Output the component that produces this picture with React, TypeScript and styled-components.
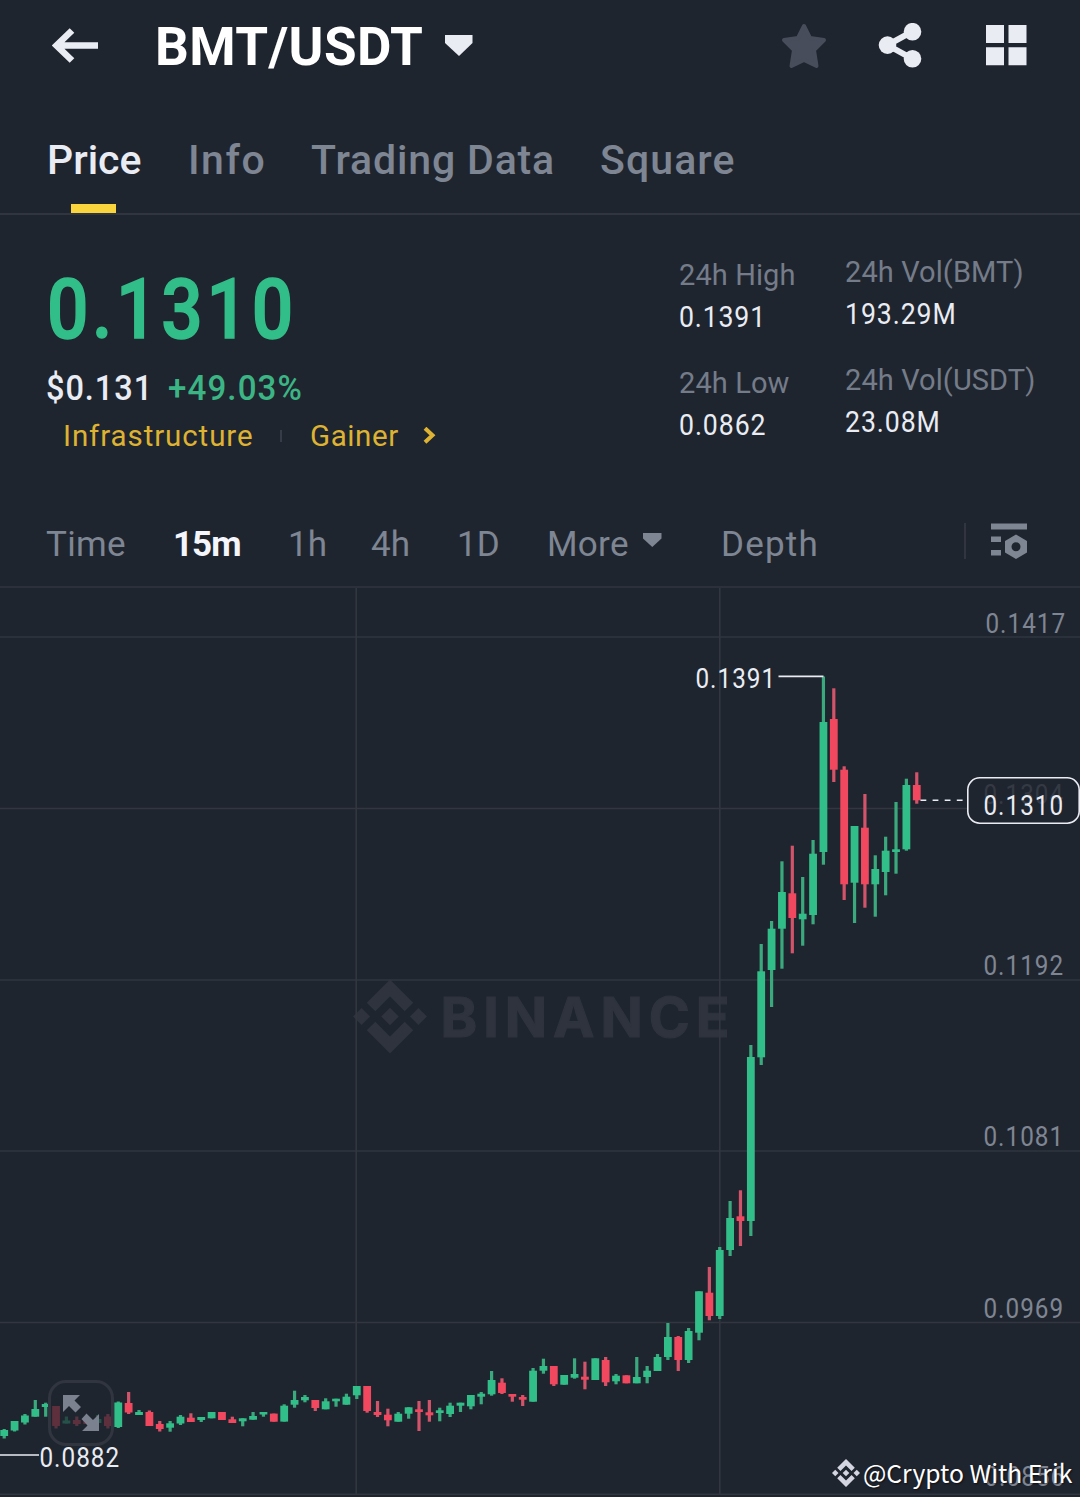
import React from "react";
import styled, { createGlobalStyle } from "styled-components";

const c = {
  bg: "#1f252f",
  line: "#30353f",
  text: "#eaecf3",
  muted: "#7f8693",
  faint: "#757c89",
  up: "#32be88",
  upWick: "#3ba97e",
  down: "#f1475f",
  downWick: "#d2546a",
  gold: "#deb232",
};

const Global = createGlobalStyle`
  *, *::before, *::after { box-sizing: border-box; }
  body { margin: 0; background: ${c.bg}; }
`;

const Screen = styled.main`
  width: 1080px;
  height: 1497px;
  overflow: hidden;
  display: flex;
  flex-direction: column;
  background: ${c.bg};
  color: ${c.text};
  font-family: Roboto, "Liberation Sans", sans-serif;
  white-space: nowrap;
`;

const Header = styled.header`
  height: 94px;
  flex: none;
  display: flex;
  align-items: center;
  padding: 0 52px;
`;

const Title = styled.h1`
  margin: 0 0 0 57px;
  width: 270px;
  font-size: 53px;
  line-height: 60px;
  font-weight: 700;
  letter-spacing: 0.4px;
  color: #fff;
`;

const Actions = styled.div`
  margin-left: auto;
  display: flex;
  align-items: center;
`;

const Icon = styled.svg<{ $ml?: number }>`
  display: block;
  flex: none;
  margin-left: ${(p) => p.$ml ?? 0}px;
`;

const Tabs = styled.nav`
  height: 121px;
  flex: none;
  display: flex;
  padding: 41px 47px 0;
  border-bottom: 2px solid ${c.line};
`;

const Tab = styled.div<{ $active?: boolean; $w: number; $ls?: number }>`
  width: ${(p) => p.$w}px;
  display: flex;
  flex-direction: column;
  justify-content: space-between;
  font-size: 41px;
  line-height: 50px;
  font-weight: 500;
  letter-spacing: ${(p) => p.$ls ?? 0}px;
  color: ${(p) => (p.$active ? c.text : c.muted)};
  &::after {
    content: "";
    width: 45px;
    height: 9px;
    margin-left: 24px;
    background: ${(p) => (p.$active ? "#fad43c" : "transparent")};
  }
`;

const Summary = styled.section`
  height: 287px;
  flex: none;
  display: flex;
  justify-content: space-between;
  padding: 36px 0 0 46px;
`;

const Quote = styled.div`
  display: flex;
  flex-direction: column;
  padding-top: 8px;
`;

const LastPrice = styled.div`
  padding-left: 1px;
  font-size: 83px;
  line-height: 102px;
  font-weight: 500;
  letter-spacing: 4.2px;
  color: ${c.up};
  -webkit-text-stroke: 1.6px ${c.up};
  transform: scaleX(0.88);
  transform-origin: 0 50%;
`;

const Change = styled.div`
  display: flex;
  gap: 17px;
  font-size: 35px;
  line-height: 56px;
  font-weight: 500;
`;

const Fiat = styled.span`
  width: 105px;
  letter-spacing: 1px;
  transform: scaleX(0.93);
  transform-origin: 0 50%;
`;

const Percent = styled.span`
  letter-spacing: 1.2px;
  color: #3cb585;
  transform: scaleX(0.945);
  transform-origin: 0 50%;
`;

const Tags = styled.div`
  display: flex;
  align-items: center;
  padding-left: 17px;
  font-size: 29.5px;
  line-height: 38px;
  color: ${c.gold};
`;

const Tag = styled.span<{ $w: number; $ls: number }>`
  width: ${(p) => p.$w}px;
  letter-spacing: ${(p) => p.$ls}px;
`;

const TagDivider = styled.i`
  width: 2px;
  height: 12px;
  margin: 0 28px 0 27px;
  background: #373d48;
`;

const Stats = styled.div`
  display: grid;
  grid-template-columns: 166px 235px;
  align-content: start;
`;

const StatColumn = styled.dl<{ $lift?: boolean }>`
  margin: 0;
  padding-top: ${(p) => (p.$lift ? 0 : 3)}px;
  font-size: 29px;
  line-height: 42px;
`;

const StatLabel = styled.dt<{ $ls: number }>`
  letter-spacing: ${(p) => p.$ls}px;
  color: ${c.faint};
`;

const StatValue = styled.dd<{ $ls: number }>`
  margin: 0 0 24px;
  letter-spacing: ${(p) => p.$ls}px;
  transform: scaleX(0.92);
  transform-origin: 0 50%;
`;

const Intervals = styled.nav`
  height: 86px;
  flex: none;
  display: flex;
  align-items: center;
  padding: 1px 52px 0 46px;
  border-bottom: 2px solid #2b303a;
`;

const Interval = styled.div<{ $w: number; $active?: boolean; $ls?: number }>`
  width: ${(p) => p.$w}px;
  display: flex;
  align-items: center;
  font-size: 35px;
  line-height: 44px;
  font-weight: ${(p) => (p.$active ? 700 : 400)};
  letter-spacing: ${(p) => p.$ls ?? 0}px;
  color: ${(p) => (p.$active ? "#f4f6fb" : c.muted)};
`;

const ToolDivider = styled.i`
  width: 2px;
  height: 36px;
  margin: -8px 0 0 auto;
  background: ${c.line};
`;

const ChartArea = styled.section`
  position: relative;
  flex: 1;
  min-height: 0;
`;

const Plot = styled.svg`
  display: block;
`;

const ExpandButton = styled.button`
  position: absolute;
  left: 48px;
  top: 792px;
  width: 66px;
  height: 66px;
  padding: 0;
  display: grid;
  place-items: center;
  border: 3px solid #30353f;
  border-radius: 18px;
  background: rgba(31, 37, 47, 0.7);
`;

const Credit = styled.div`
  position: absolute;
  left: 832px;
  top: 867px;
  height: 36px;
  display: flex;
  align-items: center;
  gap: 3px;
  font-family: "Noto Sans CJK SC", "Noto Sans", sans-serif;
  font-size: 24.7px;
  line-height: 36px;
  color: #fff;
  text-shadow: 1px 1px 2px rgba(0, 0, 0, 0.6);
`;

const Handle = styled.span`
  padding-bottom: 3px;
`;

/* [direction, high, body top, body bottom, low] */
type Candle = ["u" | "d", number, number, number, number];

const candles: Candle[] = [
  ["u", 1429, 1430, 1436, 1438.5],
  ["u", 1421, 1421, 1430.5, 1431.5],
  ["u", 1414, 1415.5, 1422.5, 1424.5],
  ["u", 1400, 1409, 1416.7, 1416.7],
  ["u", 1402.7, 1404, 1407, 1416.7],
  ["d", 1406, 1406, 1426, 1428.5],
  ["u", 1416.5, 1420.5, 1423.5, 1423.5],
  ["d", 1416.5, 1420, 1424, 1426],
  ["d", 1418, 1420, 1424, 1424],
  ["u", 1415, 1419, 1423, 1423],
  ["d", 1414, 1416.5, 1426, 1428.5],
  ["u", 1401.5, 1402.5, 1427, 1428],
  ["d", 1392, 1403, 1412.5, 1414],
  ["u", 1410, 1412, 1415, 1415],
  ["d", 1410.5, 1412, 1426, 1426],
  ["d", 1421, 1424, 1429, 1431.5],
  ["u", 1421, 1423.3, 1427.7, 1431.7],
  ["u", 1415, 1416.7, 1423.5, 1425],
  ["d", 1413.3, 1417.7, 1422, 1422],
  ["u", 1417, 1417, 1420, 1422],
  ["u", 1412, 1412, 1418.3, 1418.3],
  ["d", 1412, 1412, 1420, 1420],
  ["d", 1416.7, 1419.3, 1423, 1423],
  ["u", 1418.3, 1418.3, 1421.3, 1426.3],
  ["u", 1412, 1416, 1419.7, 1419.7],
  ["u", 1412, 1412, 1414.5, 1416.7],
  ["d", 1413.6, 1413.6, 1421.7, 1421.7],
  ["u", 1404.3, 1405.7, 1421.6, 1421.6],
  ["u", 1390.7, 1400, 1404.7, 1407.7],
  ["u", 1395, 1397, 1400.3, 1402.3],
  ["d", 1400, 1400, 1408, 1411],
  ["u", 1398.3, 1401.3, 1409.3, 1409.3],
  ["u", 1398.7, 1398.7, 1401.3, 1406.7],
  ["u", 1393.7, 1396.7, 1404.7, 1404.7],
  ["u", 1386, 1386, 1395.3, 1399],
  ["d", 1386, 1386, 1411, 1412.7],
  ["d", 1401, 1412, 1415, 1417],
  ["d", 1408.7, 1414.7, 1420.3, 1426.3],
  ["u", 1412, 1413.7, 1421.7, 1421.7],
  ["u", 1407.3, 1407.3, 1413.7, 1418.7],
  ["d", 1401, 1409.3, 1412, 1431],
  ["d", 1400, 1412.3, 1415.3, 1421.7],
  ["u", 1407.7, 1410.3, 1413, 1421.3],
  ["u", 1402.7, 1405.7, 1414, 1417],
  ["u", 1402.7, 1402.7, 1405.7, 1412],
  ["u", 1395, 1395, 1406.3, 1409.3],
  ["u", 1392, 1393.7, 1396.7, 1404.3],
  ["u", 1371, 1380, 1394.3, 1395.7],
  ["d", 1378.3, 1382.7, 1393, 1394],
  ["d", 1394, 1394, 1396.7, 1401.7],
  ["d", 1395, 1397, 1399.7, 1406],
  ["u", 1368, 1370.7, 1401.7, 1401.7],
  ["u", 1358.7, 1366, 1370.7, 1373.7],
  ["d", 1366, 1366, 1384.3, 1386],
  ["u", 1375, 1375, 1384.7, 1384.7],
  ["u", 1358.3, 1374, 1377.7, 1378.7],
  ["d", 1361.7, 1376.7, 1379.7, 1389.3],
  ["u", 1358.3, 1358.3, 1380, 1380],
  ["d", 1357, 1360, 1382.3, 1386],
  ["u", 1374, 1375.7, 1381.3, 1384.3],
  ["d", 1375.3, 1375.3, 1383.3, 1383.3],
  ["u", 1357, 1377, 1383.3, 1383.3],
  ["u", 1366, 1370.7, 1377, 1383.3],
  ["u", 1354, 1357, 1371, 1371],
  ["u", 1323, 1337, 1357, 1360],
  ["d", 1336, 1337, 1360, 1371],
  ["u", 1328, 1331, 1360, 1363],
  ["u", 1291.3, 1291.3, 1332.7, 1340.3],
  ["d", 1267, 1292.7, 1316, 1320.3],
  ["u", 1247, 1250, 1316, 1319],
  ["u", 1201, 1218, 1250, 1256],
  ["d", 1190.3, 1216.3, 1221, 1246],
  ["u", 1045, 1057, 1221, 1236],
  ["u", 944, 971.3, 1057.3, 1065],
  ["u", 921, 928.7, 970, 1007],
  ["u", 861.3, 892, 928.7, 968.7],
  ["d", 845.7, 893.3, 918, 953.3],
  ["u", 877, 913.7, 919.3, 945.7],
  ["u", 840, 853.7, 915, 924.3],
  ["u", 676.5, 722, 852, 864.7],
  ["d", 688.3, 719, 769.7, 782],
  ["d", 766.3, 769.7, 884.3, 900],
  ["u", 826, 826, 882.7, 923],
  ["d", 794, 827.7, 884.3, 907.7],
  ["u", 855.3, 869, 884.3, 916.7],
  ["u", 836.7, 850.7, 872, 895.3],
  ["u", 802, 849.3, 852, 873.7],
  ["u", 778.7, 785, 849.3, 850.7],
  ["d", 772.3, 785, 800.3, 803.7],
];

const FIRST_X = 4.2;
const STEP = 10.37;

const axis = [
  { v: "0.1417", x: 986, y: 632 },
  { v: "0.1192", x: 984, y: 974 },
  { v: "0.1081", x: 984, y: 1145 },
  { v: "0.0969", x: 984, y: 1317 },
  { v: "0.0856", x: 985, y: 1485 },
];

function BinanceMark({ size, color, x, y }: { size: number; color: string; x?: number; y?: number }) {
  return (
    <svg x={x} y={y} width={size} height={size} viewBox="0 0 126.61 126.61" fill={color}>
      <path d="m38.17 53.2 25.14-25.14 25.15 25.15 14.63-14.63L63.31-1.2l-39.77 39.77z" transform="translate(0 1.2)" />
      <path d="m0 63.31 14.63-14.63 14.63 14.63-14.63 14.63z" />
      <path d="m38.17 73.41 25.14 25.14 25.15-25.15 14.63 14.62-39.78 39.78-39.77-39.77z" transform="translate(0 -1.2)" />
      <path d="m97.35 63.31 14.63-14.63 14.63 14.63-14.63 14.63z" />
      <path d="m48.3 63.31 15.01-15.01 15.01 15.01-15.01 15.01z" />
    </svg>
  );
}

const GLYPH_SCALE = 0.9;

function PriceText({ x, y, children, fill }: { x: number; y: number; children: string; fill: string }) {
  return (
    <text
      transform={`translate(${x - 0.6} ${y + 0.6}) scale(${GLYPH_SCALE} 1)`}
      fontSize={27}
      fill={fill}
      textLength={79.8 / GLYPH_SCALE}
      lengthAdjust="spacing"
    >
      {children}
    </text>
  );
}

function Chart() {
  return (
    <Plot width={1080} height={909} viewBox="0 588 1080 909">
      <g fill="#2e333e">
        <BinanceMark x={353} y={979.5} size={74} color="#2e333e" />
        <text
          x={440.5}
          y={1036.5}
          fontFamily="Inter"
          fontWeight={700}
          fontSize={55.5}
          stroke="#2e333e"
          strokeWidth={1.2}
          textLength={289}
          lengthAdjust="spacing"
        >
          BINANCE
        </text>
      </g>
      <g stroke="#31363f" strokeWidth={1.6}>
        {[637, 808.5, 980, 1151, 1322.5, 1494.3].map((y) => (
          <line key={y} x1={0} x2={1080} y1={y} y2={y} />
        ))}
        {[356.2, 719.8].map((x) => (
          <line key={x} x1={x} x2={x} y1={588} y2={1494} />
        ))}
      </g>
      {axis.map((a) => (
        <PriceText key={a.v} x={a.x} y={a.y} fill={c.muted}>
          {a.v}
        </PriceText>
      ))}
      {candles.map(([d, high, top, bottom, low], i) => {
        const x = FIRST_X + STEP * i;
        return (
          <g key={i}>
            <rect x={x - 1.6} y={high} width={3.2} height={low - high} fill={d === "u" ? c.upWick : c.downWick} />
            <rect x={x - 3.9} y={top} width={7.8} height={bottom - top} fill={d === "u" ? c.up : c.down} />
          </g>
        );
      })}
      <g stroke={c.text} strokeWidth={1.6}>
        <line x1={778.5} x2={823.5} y1={676.4} y2={676.4} />
        <line x1={0} x2={39} y1={1455} y2={1455} />
        <line x1={920.5} x2={963} y1={800.3} y2={800.3} strokeDasharray="5.8 6.3" />
        <rect x={967.8} y={777.8} width={111.4} height={45.4} rx={12} fill={c.bg} />
      </g>
      <PriceText x={984} y={803} fill="#343a44">0.1304</PriceText>
      <PriceText x={984} y={814} fill={c.text}>0.1310</PriceText>
      <PriceText x={696} y={687} fill={c.text}>0.1391</PriceText>
      <PriceText x={40} y={1466} fill={c.text}>0.0882</PriceText>
    </Plot>
  );
}

export default function App() {
  return (
    <Screen>
      <Global />
      <Header>
        <Icon width={46} height={38} viewBox="0 0 46 38">
          <path d="M20 2.5 4.5 17.5 20 32.5M5 17.5H46" fill="none" stroke={c.text} strokeWidth={6.6} />
        </Icon>
        <Title>BMT/USDT</Title>
        <Icon width={28} height={24} viewBox="0 0 28 24" $ml={20}>
          <path d="M0 0H27.5V8L14 21 0 8Z" fill={c.text} />
        </Icon>
        <Actions>
          <Icon width={46} height={48} viewBox="0 1 46 48">
            <path
              d="M23 4 29 16 43 18 33 28 35.5 44 23 38 10.5 44 13 28 3 18 17 16Z"
              fill="#474d5a"
              stroke="#474d5a"
              strokeWidth={4}
              strokeLinejoin="round"
            />
          </Icon>
          <Icon width={44} height={48} viewBox="0 1.7 44 48" $ml={51}>
            <path d="M34.5 10 9.5 23.8 34.5 37.5" fill="none" stroke={c.text} strokeWidth={6} />
            <g fill={c.text}>
              <circle cx={34.5} cy={10.4} r={8.8} />
              <circle cx={9.5} cy={23.8} r={8.8} />
              <circle cx={34.5} cy={37.5} r={8.8} />
            </g>
          </Icon>
          <Icon width={42} height={44} viewBox="0 0 42 44" $ml={64}>
            <path d="M0 0H18V18H0ZM22.5 0H40.5V18H22.5ZM0 22.3H18V40.3H0ZM22.5 22.3H40.5V40.3H22.5Z" fill={c.text} />
          </Icon>
        </Actions>
      </Header>

      <Tabs>
        <Tab $active $w={141}>Price</Tab>
        <Tab $w={123} $ls={1.5}>Info</Tab>
        <Tab $w={289} $ls={0.85}>Trading Data</Tab>
        <Tab $w={150} $ls={1.1}>Square</Tab>
      </Tabs>

      <Summary>
        <Quote>
          <LastPrice>0.1310</LastPrice>
          <Change>
            <Fiat>$0.131</Fiat>
            <Percent>+49.03%</Percent>
          </Change>
          <Tags>
            <Tag $w={190} $ls={0.9}>Infrastructure</Tag>
            <TagDivider />
            <Tag $w={113} $ls={0.6}>Gainer</Tag>
            <Icon width={14} height={18} viewBox="0 0.8 14 18">
              <path d="M2 2 9.5 9 2 16" fill="none" stroke={c.gold} strokeWidth={4} />
            </Icon>
          </Tags>
        </Quote>
        <Stats>
          <StatColumn>
            <StatLabel $ls={0.1}>24h High</StatLabel>
            <StatValue $ls={0.9}>0.1391</StatValue>
            <StatLabel $ls={0.1}>24h Low</StatLabel>
            <StatValue $ls={1}>0.0862</StatValue>
          </StatColumn>
          <StatColumn $lift>
            <StatLabel $ls={0.1}>24h Vol(BMT)</StatLabel>
            <StatValue $ls={1}>193.29M</StatValue>
            <StatLabel $ls={0.1}>24h Vol(USDT)</StatLabel>
            <StatValue $ls={1}>23.08M</StatValue>
          </StatColumn>
        </Stats>
      </Summary>

      <Intervals>
        <Interval $w={127} $ls={0.3}>Time</Interval>
        <Interval $w={115} $active $ls={-1}>15m</Interval>
        <Interval $w={83}>1h</Interval>
        <Interval $w={86}>4h</Interval>
        <Interval $w={90}>1D</Interval>
        <Interval $w={174} $ls={0.3}>
          More
          <Icon width={19} height={22} viewBox="0 1 19 22" overflow="visible" $ml={14}>
            <path d="M0 0H18.5V5.5L9.3 14 0 5.5Z" fill={c.muted} />
          </Icon>
        </Interval>
        <Interval $w={100} $ls={1.2}>Depth</Interval>
        <ToolDivider />
        <Icon width={37} height={42} viewBox="0 1 37 42" overflow="visible" $ml={25}>
          <g fill={c.muted}>
            <path d="M0 0.5H36V6.5H0ZM0 13.5H10V19H0ZM0 27H10V32.5H0Z" />
            <path fillRule="evenodd" d="M25 11.5 36 18V29.5L25 36 14 29.5V18ZM25 19.3A4.5 4.5 0 1 0 25 28.3 4.5 4.5 0 1 0 25 19.3Z" />
          </g>
        </Icon>
      </Intervals>

      <ChartArea>
        <Chart />
        <ExpandButton>
          <svg width={36} height={37} viewBox="0 0 36 37" fill="#7b818e">
            <path d="M0 0H17L11.5 5.5 18 12 12.5 17.5 6 11 0 17Z" />
            <path d="M36 36H19L24.5 30.5 18.5 24 23.5 18.5 30 25 36 19Z" />
          </svg>
        </ExpandButton>
        <Credit>
          <BinanceMark size={28} color="#d3d6e0" />
          <Handle>@Crypto With Erik</Handle>
        </Credit>
      </ChartArea>
    </Screen>
  );
}
